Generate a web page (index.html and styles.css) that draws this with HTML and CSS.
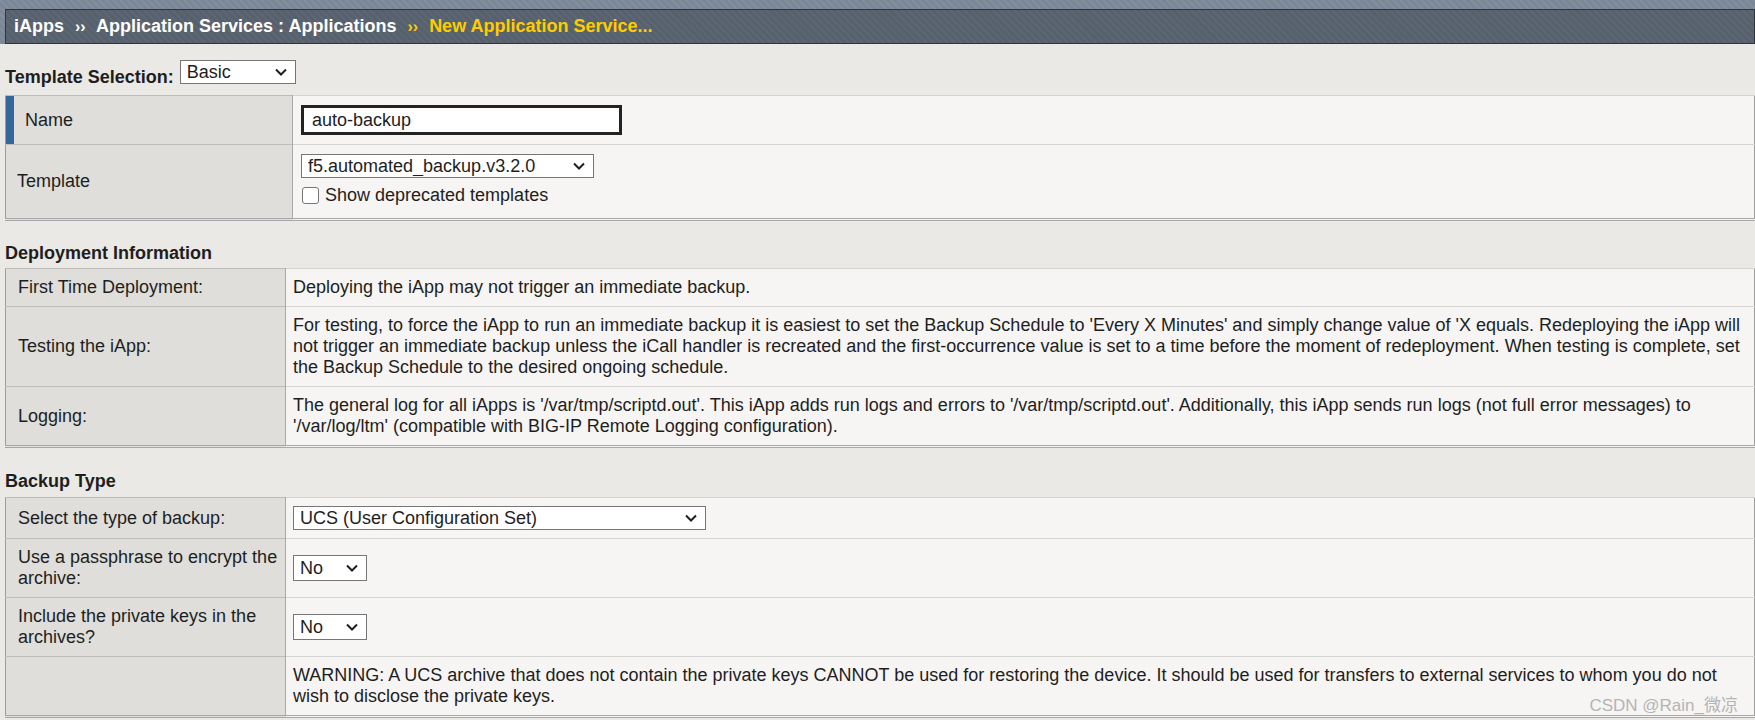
FILE: index.html
```html
<!DOCTYPE html>
<html>
<head>
  <title>New Application Service</title>
  <link rel="stylesheet" href="styles.css">
</head>
<body>
  <div id="banner">
    <div id="pagetitle">
      <span class="crumb">iApps</span>
      <span class="sep">&rsaquo;&rsaquo;</span>
      <span class="crumb">Application Services : Applications</span>
      <span class="sep current">&rsaquo;&rsaquo;</span>
      <span class="crumb current">New Application Service...</span>
    </div>
  </div>

  <div id="content">
    <div class="template-select">
      <label for="templateSelection">Template Selection:</label>
      <span class="dropdown">
        <select id="templateSelection" class="sel-basic">
          <option>Basic</option>
          <option>Advanced</option>
        </select>
        <svg class="chevron" viewBox="0 0 12 8"><path d="M1 1.5 L6 6.5 L11 1.5"/></svg>
      </span>
    </div>

    <table class="properties main">
      <colgroup><col class="label-col"><col></colgroup>
      <tr>
        <td class="label required">Name</td>
        <td class="value"><input type="text" class="name-input" value="auto-backup"></td>
      </tr>
      <tr>
        <td class="label">Template</td>
        <td class="value template-cell">
          <span class="dropdown">
            <select class="sel-template">
              <option>f5.automated_backup.v3.2.0</option>
            </select>
            <svg class="chevron" viewBox="0 0 12 8"><path d="M1 1.5 L6 6.5 L11 1.5"/></svg>
          </span>
          <div class="checkline">
            <input type="checkbox" id="showDeprecated">
            <label for="showDeprecated">Show deprecated templates</label>
          </div>
        </td>
      </tr>
    </table>

    <h3 class="section-title">Deployment Information</h3>
    <table class="properties">
      <colgroup><col class="label-col"><col></colgroup>
      <tr>
        <td class="label">First Time Deployment:</td>
        <td class="value">Deploying the iApp may not trigger an immediate backup.</td>
      </tr>
      <tr>
        <td class="label">Testing the iApp:</td>
        <td class="value">For testing, to force the iApp to run an immediate backup it is easiest to set the Backup Schedule to 'Every X Minutes' and simply change value of 'X equals. Redeploying the iApp will not trigger an immediate backup unless the iCall handler is recreated and the first-occurrence value is set to a time before the moment of redeployment. When testing is complete, set the Backup Schedule to the desired ongoing schedule.</td>
      </tr>
      <tr>
        <td class="label">Logging:</td>
        <td class="value">The general log for all iApps is '/var/tmp/scriptd.out'. This iApp adds run logs and errors to '/var/tmp/scriptd.out'. Additionally, this iApp sends run logs (not full error messages) to '/var/log/ltm' (compatible with BIG-IP Remote Logging configuration).</td>
      </tr>
    </table>

    <h3 class="section-title backup">Backup Type</h3>
    <div class="last-section">
      <table class="properties">
        <colgroup><col class="label-col"><col></colgroup>
        <tr>
          <td class="label">Select the type of backup:</td>
          <td class="value">
            <span class="dropdown">
              <select class="sel-type">
                <option>UCS (User Configuration Set)</option>
                <option>SCF (Single Configuration File)</option>
              </select>
              <svg class="chevron" viewBox="0 0 12 8"><path d="M1 1.5 L6 6.5 L11 1.5"/></svg>
            </span>
          </td>
        </tr>
        <tr>
          <td class="label">Use a passphrase to encrypt the archive:</td>
          <td class="value">
            <span class="dropdown">
              <select class="sel-yesno">
                <option>No</option>
                <option>Yes</option>
              </select>
              <svg class="chevron" viewBox="0 0 12 8"><path d="M1 1.5 L6 6.5 L11 1.5"/></svg>
            </span>
          </td>
        </tr>
        <tr>
          <td class="label">Include the private keys in the archives?</td>
          <td class="value">
            <span class="dropdown">
              <select class="sel-yesno">
                <option>No</option>
                <option>Yes</option>
              </select>
              <svg class="chevron" viewBox="0 0 12 8"><path d="M1 1.5 L6 6.5 L11 1.5"/></svg>
            </span>
          </td>
        </tr>
        <tr>
          <td class="label"></td>
          <td class="value"><span class="warning">WARNING: A UCS archive that does not contain the private keys CANNOT be used for restoring the device. It should be used for transfers to external services to whom you do not wish to disclose the private keys.</span></td>
        </tr>
      </table>
      <span class="watermark">CSDN @Rain_微凉</span>
    </div>
  </div>
</body>
</html>
```

FILE: styles.css
```css
body {
  margin: 0;
  font-family: "Liberation Sans", Arial, sans-serif;
  font-size: 18px;
  color: #1e1e1e;
  background-color: #eae9e5;
}
#banner {
  padding: 9px 0 0 5px;
  background-color: #7a8797;
  background-image: repeating-linear-gradient(45deg, rgba(255,255,255,0.06) 0 2px, rgba(0,0,0,0) 2px 5px);
}
#pagetitle {
  height: 33px;
  line-height: 33px;
  padding-left: 8px;
  border: 1px solid #2f353c;
  background-color: #56616d;
  background-image: repeating-linear-gradient(45deg, rgba(255,255,255,0.035) 0 2px, rgba(0,0,0,0) 2px 5px);
  color: #fff;
  font-weight: bold;
  white-space: nowrap;
}
#pagetitle .sep {
  margin: 0 6px;
  font-size: 16px;
}
#pagetitle .current {
  color: #ffcc00;
}
#content {
  padding-left: 5px;
}
.template-select {
  display: flex;
  align-items: flex-end;
  gap: 6px;
  padding: 16px 0 7px 0;
}
.template-select label {
  font-weight: bold;
  line-height: 21px;
}
.template-select .dropdown {
  margin-bottom: 4px;
}

/* selects */
.dropdown {
  position: relative;
  display: inline-block;
  vertical-align: middle;
}
.dropdown select {
  -webkit-appearance: none;
  appearance: none;
  display: block;
  height: 24px;
  margin: 0;
  padding: 0 0 0 6px;
  border: 1px solid #767676;
  border-radius: 0;
  background: #fff;
  font-family: "Liberation Sans", Arial, sans-serif;
  font-size: 18px;
  color: #1e1e1e;
}
.dropdown .chevron {
  position: absolute;
  right: 9px;
  top: 50%;
  width: 12px;
  height: 8px;
  margin-top: -4px;
  fill: none;
  stroke: #1e1e1e;
  stroke-width: 2;
  pointer-events: none;
}
.sel-basic { width: 116px; }
.sel-template { width: 293px; }
.sel-type { width: 413px; }
.dropdown .sel-yesno { width: 74px; height: 26px; }

/* property tables */
.properties {
  width: 100%;
  table-layout: fixed;
  border-collapse: collapse;
  border: 1px solid #9c9c9c;
  border-bottom: 3px double #a8a8a8;
}
.properties .label-col {
  width: 280px;
}
.properties.main .label-col {
  width: 287px;
}
.properties td {
  padding: 8px 8px 8px 7px;
  border-top: 1px solid #d4d4d2;
  line-height: 21px;
  vertical-align: middle;
}
.properties td.label {
  padding: 8px 5px 8px 12px;
  background-color: #dfdedb;
  border-right: 1px solid #a8a8a8;
  border-top-color: #bdbcba;
}
.properties td.value {
  background-color: #f6f5f3;
}
.properties.main td {
  padding-left: 8px;
}
.properties.main td.label {
  padding-left: 11px;
}
.properties.main td.required {
  padding-left: 19px;
  box-shadow: inset 8px 0 0 #34679a;
}
.name-input {
  display: block;
  box-sizing: border-box;
  width: 321px;
  height: 30px;
  margin: 1px 0;
  padding: 0 8px;
  border: 3px solid #232323;
  background: #fff;
  font-family: "Liberation Sans", Arial, sans-serif;
  font-size: 18px;
  color: #1e1e1e;
}
.properties .template-cell {
  padding-top: 9px;
  padding-bottom: 12px;
}
.template-cell .dropdown {
  display: block;
  width: 293px;
}
.checkline {
  display: flex;
  align-items: center;
  gap: 6px;
  margin-top: 7px;
}
.checkline input {
  -webkit-appearance: none;
  appearance: none;
  width: 17px;
  height: 17px;
  margin: 0 0 0 1px;
  border: 1px solid #767676;
  border-radius: 3px;
  background: #fff;
}
.section-title {
  margin: 22px 0 4px 0;
  font-size: 18px;
  line-height: 21px;
  font-weight: bold;
}
.section-title.backup {
  margin: 23px 0 5px 0;
}
.last-section {
  position: relative;
}
.watermark {
  position: absolute;
  right: 17px;
  bottom: 2px;
  font-family: "Liberation Sans", "Noto Sans CJK SC", sans-serif;
  font-size: 17px;
  line-height: 20px;
  color: #b4b4b4;
}
```
